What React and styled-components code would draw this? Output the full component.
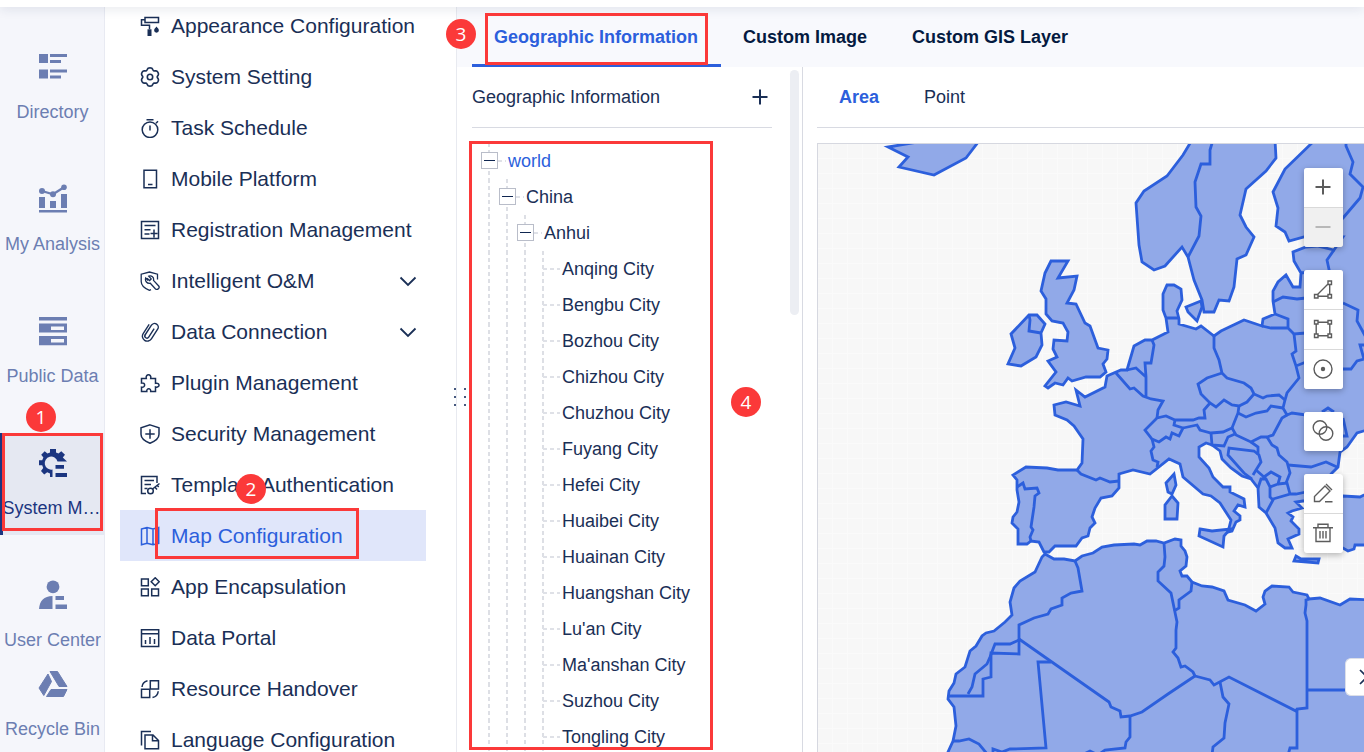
import styled, { createGlobalStyle, css } from 'styled-components';

const blue = '#2c5fdc';
const ink = '#1a2f56';
const muted = '#6c7eb2';
const red = '#fb3939';

const GlobalStyle = createGlobalStyle`
  * { box-sizing: border-box; }
  body {
    margin: 0;
    font-family: 'Liberation Sans', Arial, sans-serif;
    font-size: 18px;
    color: ${ink};
    background: #fff;
  }
  button {
    padding: 0;
    border: 0;
    background: none;
    color: inherit;
    font: inherit;
    cursor: pointer;
  }
  a { color: inherit; text-decoration: none; }
  ul { margin: 0; padding: 0; list-style: none; }
  svg { display: block; flex: none; }
`;

const Page = styled.div`
  position: relative;
  display: flex;
  flex-direction: column;
  height: 100vh;
  overflow: hidden;
`;

const TopBar = styled.header`
  position: relative;
  z-index: 2;
  flex: none;
  height: 7px;
  background: #fff;
  box-shadow: 0 1px 12px rgba(30, 50, 90, 0.15);
`;

const Body = styled.div`
  display: flex;
  flex: 1;
  min-height: 0;
`;

/* ---------- left rail ---------- */

const Rail = styled.nav`
  display: flex;
  flex-direction: column;
  flex: none;
  width: 105px;
  border-right: 1px solid #e8eaf2;
  background: #f5f6fb;
`;

const RailList = styled.ul`
  display: flex;
  flex: 1;
  flex-direction: column;
  gap: 30px;
  min-height: 0;
  padding-top: 30px;
  overflow: hidden;
`;

const RailFoot = styled.div`
  flex: none;
  height: 98px;
`;

const RailLink = styled.a`
  display: flex;
  flex-direction: column;
  align-items: center;
  gap: 19px;
  height: 102px;
  padding: 15px 0 0 1px;
  color: ${muted};
  ${p =>
    p.$active &&
    css`
      background: #e5e8f2;
      box-shadow: inset 3px 0 #1b3580;
      color: #1b3580;
    `}
`;

const RailLabel = styled.span`
  max-width: 100px;
  overflow: hidden;
  line-height: 22px;
  text-overflow: ellipsis;
  white-space: nowrap;
`;

/* ---------- settings menu ---------- */

const Menu = styled.nav`
  flex: none;
  width: 352px;
  padding: 0 30px 0 15px;
  border-right: 1px solid #e8eaf0;
  overflow: hidden;
`;

const MenuList = styled.ul`
  margin-top: -7px;
`;

const MenuLink = styled.a`
  display: flex;
  align-items: center;
  gap: 11px;
  height: 51px;
  padding: 0 8px 0 20px;
  font-size: 21px;
  white-space: nowrap;
  color: ${p => (p.$active ? blue : ink)};
  background: ${p => (p.$active ? '#e0e6fa' : 'none')};
`;

const MenuText = styled.span`
  flex: 1;
`;

/* ---------- content ---------- */

const Content = styled.main`
  display: flex;
  flex: 1;
  flex-direction: column;
  min-width: 0;
`;

const TabBar = styled.div`
  display: flex;
  flex: none;
  height: 60px;
  padding-left: 15px;
  background: #f8f9fd;
`;

const Tab = styled.button`
  padding: 4px 23px 0 22px;
  border-bottom: 3px solid ${p => (p.$active ? blue : 'transparent')};
  font-weight: bold;
  color: ${p => (p.$active ? blue : '#041a40')};
`;

const Panes = styled.div`
  display: flex;
  flex: 1;
  min-height: 0;
`;

const TreePane = styled.section`
  display: flex;
  flex: none;
  width: 346px;
  padding-left: 15px;
  border-right: 1px solid #d8dae2;
  overflow: hidden;
`;

const TreeBody = styled.div`
  width: 300px;
`;

const TreeHead = styled.div`
  display: flex;
  align-items: center;
  justify-content: space-between;
  height: 61px;
  padding-right: 4px;
  border-bottom: 1px solid #d8dae2;
`;

const Scrollbar = styled.div`
  width: 9px;
  height: 245px;
  margin: 3px 0 0 18px;
  border-radius: 5px;
  background: #eceef3;
`;

const Tree = styled.ul`
  padding: 15px 0 0 8px;
`;

const TreeRow = styled.li`
  display: flex;
  align-items: center;
  height: 36px;
  white-space: nowrap;
  color: ${p => (p.$active ? blue : ink)};
`;

const Guide = styled.span`
  display: flex;
  align-items: center;
  justify-content: center;
  width: 18px;
  height: 36px;
  padding-bottom: 1px;
  background: repeating-linear-gradient(#dddfe5 0 4px, transparent 4px 7px) center / 2px 100% no-repeat;
`;

const Dashes = styled.span`
  width: ${p => (p.$leaf ? 17 : 8)}px;
  height: 2px;
  margin: 0 2px 0 ${p => (p.$leaf ? -9 : 0)}px;
  background: repeating-linear-gradient(90deg, #dfe1e7 0 4px, transparent 4px 7px);
`;

const Toggle = styled.button`
  display: flex;
  align-items: center;
  justify-content: center;
  width: 17px;
  height: 17px;
  border: 1px solid #b9bdc9;
  background: #fff;

  &::after {
    content: '';
    width: 11px;
    height: 1px;
    background: #0f2650;
  }
`;

const MapPane = styled.section`
  display: flex;
  flex: 1;
  flex-direction: column;
  min-width: 0;
  padding-left: 14px;
`;

const SubTabs = styled.div`
  display: flex;
  flex: none;
  gap: 45px;
  height: 61px;
  margin-bottom: 15px;
  padding-left: 22px;
  border-bottom: 1px solid #d8dae2;
`;

const SubTab = styled.button`
  font-weight: ${p => (p.$active ? 'bold' : 'normal')};
  color: ${p => (p.$active ? blue : ink)};
`;

const MapBox = styled.div`
  position: relative;
  flex: 1;
  min-height: 0;
  border: solid #d6d8e0;
  border-width: 1px 0 0 1px;
  overflow: hidden;
  background:
    linear-gradient(90deg, #fafafa 1px, transparent 1px) 14px 14px / 15px 15px,
    linear-gradient(#fafafa 1px, transparent 1px) 14px 14px / 15px 15px,
    #f7f7f7;
`;

const Tools = styled.div`
  position: absolute;
  top: 24px;
  right: 21px;
  display: flex;
  flex-direction: column;
  gap: 23px;
`;

const ToolGroup = styled.div`
  display: flex;
  flex-direction: column;
  gap: 1px;
  border-radius: 3px;
  overflow: hidden;
  background: #d9d9d9;
  box-shadow: 0 2px 6px rgba(0, 0, 0, 0.28);
`;

const Tool = styled.button`
  display: flex;
  align-items: center;
  justify-content: center;
  width: 39px;
  height: 39px;
  padding: 0 1px 1px 0;
  color: #5c5c5c;
  background: #fff;

  &:disabled {
    color: #b8b8b8;
    background: #f0f0f0;
  }
`;

const Expand = styled.button`
  position: absolute;
  top: 514px;
  right: 0;
  display: flex;
  align-items: center;
  width: 19px;
  height: 38px;
  padding-left: 13px;
  border: 1px solid #dcdfe8;
  border-right: 0;
  border-radius: 6px 0 0 6px;
  background: #fff;
  overflow: hidden;
`;

/* ---------- overlays ---------- */

const Grip = styled.span`
  position: absolute;
  top: 388px;
  left: 454px;
  display: grid;
  grid-template-columns: 2px 2px;
  gap: 6px 8px;

  i {
    width: 2px;
    height: 2px;
    background: #46587e;
  }
`;

const Frame = styled.div`
  position: absolute;
  z-index: 3;
  top: ${p => p.$top}px;
  left: ${p => p.$left}px;
  width: ${p => p.$width}px;
  height: ${p => p.$height}px;
  border: 3px solid ${red};
  pointer-events: none;
`;

const Step = styled.span`
  position: absolute;
  z-index: 3;
  top: ${p => p.$top}px;
  left: ${p => p.$left}px;
  width: 30px;
  border-radius: 50%;
  background: ${red};
  color: #fff;
  font: 19px/30px 'Open Sans', 'Noto Sans', sans-serif;
  text-align: center;
`;

/* ---------- icons ---------- */

const Line = ({ children, size = 20, w = 1.5 }) => (
  <svg width={size} height={size} viewBox={`0 0 ${size} ${size}`} fill="none" stroke="currentColor" strokeWidth={w}>
    {children}
  </svg>
);

const Solid = ({ children }) => (
  <svg width="30" height="30" viewBox="0 0 30 30" fill="currentColor">
    {children}
  </svg>
);

// six soft teeth around the hub
const gearPath =
  'M' +
  Array.from({ length: 60 }, (_, i) => {
    const a = (i / 60) * Math.PI * 2;
    const r = 8.4 - 1 * Math.cos(6 * a) - 0.25 * Math.cos(12 * a);
    return `${(10 + r * Math.cos(a)).toFixed(2)} ${(10 + r * Math.sin(a)).toFixed(2)}`;
  }).join('L') +
  'Z';

const icons = {
  roller: (
    <Line>
      <path d="M5 1.5h13.500v5H5zM5 3.800H1.500v5.500h8v4" />
      <path d="M7.500 13.300h4V20h-4z" fill="currentColor" stroke="none" />
      <path d="M16.500 10.500c1.400 1.800 2.400 2.600 2.400 3.800a2.400 2.400 0 0 1-4.800 0c0-1.200 1-2 2.400-3.800z" fill="currentColor" stroke="none" />
    </Line>
  ),
  gear: (
    <Line w={1.6}>
      <path d={gearPath} />
      <circle cx="10" cy="10" r="2.700" />
    </Line>
  ),
  timer: (
    <Line>
      <circle cx="10" cy="11.700" r="7.800" />
      <path d="M6.500 1.700h7M10 7.500v5M16 5.300l2-2" />
    </Line>
  ),
  phone: (
    <Line>
      <path d="M4 1.200h12.500v17.600H4zM8 15.500h4.500" />
    </Line>
  ),
  form: (
    <Line>
      <path d="M1.500 1.500h17v17h-17zM4.500 5.500h11M4.500 9.800h6M4.500 14h5M14 9.500v8M10.500 13.500h7" />
    </Line>
  ),
  ops: (
    <Line w={1.3}>
      <path d="M17.500 8.500V3.200L9.500 1 1.200 3.200V10.500c0 4 3.500 7 8.300 8.800l1.500-.700" />
      <path d="M7 7.200l2.600 2.300 1.600-1.600L8.800 5.200c2.800-1 5.400 1.200 4.700 4.200l5.200 5.600c1.500 2-1.200 4.400-3.200 2.900l-5.200-5.700c-3.300.600-5.600-2.100-4.600-5.200L8.200 9.500" />
    </Line>
  ),
  clip: (
    <Line w={1.4}>
      <g transform="rotate(33 10 10)">
        <path d="M7.500 15.500V3.500a3.700 3.700 0 0 1 7.400 0V15a4.900 4.900 0 0 1-9.800 0V4" />
        <path d="M7.500 15a1.900 1.900 0 0 0 4.200 0V5" />
      </g>
    </Line>
  ),
  puzzle: (
    <Line>
      <path d="M1.500 5.500h4.800c-1.300-5 5.700-5 4.400 0h4.800v4.800c4.700-1.100 4.700 4.800 0 3.700v4.500h-4.800c.500-3.800-4.400-3.800-3.900 0H1.500v-4.300c4.200.700 4.200-4.900 0-4.200z" />
    </Line>
  ),
  shield: (
    <Line>
      <path d="M10 .9l9 3v6.300c0 4-3.500 6.800-9 9-5.500-2.200-9-5-9-9V3.900zM10 5.300v9.400M5.300 10h9.400" />
    </Line>
  ),
  template: (
    <Line>
      <path d="M17 8V1.500H1.500v17H6M4.500 5.500H14M4.500 9.500H11M4.500 13.500h3" />
      <circle cx="10.500" cy="16" r="2.800" />
      <path d="M12.500 14l7-5.500M15 12.200l2 2.300M17.200 10.300l1.500 1.800" />
    </Line>
  ),
  map: (
    <Line>
      <path d="M1.500 3l5.500-1.500 6 1.500 5.700-1.500v16L13 18.700l-6-1.500-5.500 1.500zM7 1.500v15.700M13 3v15.700" />
    </Line>
  ),
  apps: (
    <Line>
      <path d="M1.500 2h6.800v6.800H1.500zM1.500 12h6.800v6.800H1.500zM11.700 12h6.800v6.800h-6.800zM15.200.8l4 4-4 4-4-4z" />
    </Line>
  ),
  portal: (
    <Line>
      <path d="M1.500 1.800h17.200v16.700H1.500zM1.500 5.700h17.200M5.500 12v4M10 9v7M14.500 11v5" />
    </Line>
  ),
  handover: (
    <Line>
      <path d="M10.300 1.800h8.200V10h-8.200zM1.500 10.300h8.200v8.200H1.500zM2 8c.300-3.500 2-5.500 5.500-6.300M18.200 12.200c-.300 3.500-2 5.500-5.700 6.300" />
    </Line>
  ),
  copy: (
    <Line>
      <path d="M11 1.500H1.500v14M5 5h8l5.500 5.500v8.300H5zM12.500 5v5.800h6" />
    </Line>
  ),
  directory: (
    <Solid>
      <path d="M1 2h9v9H1zM12 2h17v3H12zM12 8h11v3H12zM1 17.500h9v9H1zM12 17.500h17v3H12zM12 23.500h11v3H12z" />
    </Solid>
  ),
  analysis: (
    <Solid>
      <path d="M1 13h6v11H1zM12 17h6v7h-6zM23 10h6v14h-6zM1 26h28v2.500H1z" />
      <circle cx="4" cy="7" r="3" />
      <circle cx="15" cy="10.300" r="3" />
      <circle cx="26" cy="3.200" r="2.800" />
      <path d="M4 7l11 3.300 11-7" fill="none" stroke="currentColor" strokeWidth="2.300" />
    </Solid>
  ),
  data: (
    <Solid>
      <path d="M1 1h28v3.500H1z" />
      <path d="M1 7.500h28v9H1zm12 3v3.500h13v-3.500zM1 20h28v9.300H1zm12 3v3.500h13V23z" fillRule="evenodd" />
    </Solid>
  ),
  system: (
    <Solid>
      <path d="M12 1h6v3.500l2.500 1 2.800-2.300 3.700 3.500-2.200 2.800L29 13.500H19.500A6.500 6.500 0 1 0 14.500 21.500V29H12v-3.500l-2.800-1.200-3 2.200L3 23l2.200-3-1-2.800H1v-5h3.200l1.200-2.700L3.200 6.700 6.700 3.300l2.700 2.200L12 4.500z" />
      <path d="M17.500 17H26v3.800h-8.500zM17.500 25H29v4H17.500z" />
    </Solid>
  ),
  user: (
    <Solid>
      <circle cx="15" cy="6.800" r="6.400" />
      <path d="M1 29c.5-8 5-13 13.500-13v13zM17.500 16H26v4h-8.500zM17.500 24.500H29V29H17.500z" />
    </Solid>
  ),
  bin: (
    <Solid>
      <path d="M12 2.500h7.500L29 17.500h-8zM10 5l3.500 7.500L5.800 26.500 1 19zM13 20.500h16L25.500 27.500H8.500z" strokeLinejoin="round" stroke="currentColor" />
    </Solid>
  ),
};

const ChevronDown = () => (
  <Line w={1.8}>
    <path d="M2.500 6.500L10 14l7.500-7.500" />
  </Line>
);

/* ---------- data ---------- */

const rail = [
  ['directory', 'Directory'],
  ['analysis', 'My Analysis'],
  ['data', 'Public Data'],
  ['system', 'System Management'],
  ['user', 'User Center'],
];

const menu = [
  ['roller', 'Appearance Configuration'],
  ['gear', 'System Setting'],
  ['timer', 'Task Schedule'],
  ['phone', 'Mobile Platform'],
  ['form', 'Registration Management'],
  ['ops', 'Intelligent O&M', true],
  ['clip', 'Data Connection', true],
  ['puzzle', 'Plugin Management'],
  ['shield', 'Security Management'],
  ['template', 'Template Authentication'],
  ['map', 'Map Configuration'],
  ['apps', 'App Encapsulation'],
  ['portal', 'Data Portal'],
  ['handover', 'Resource Handover'],
  ['copy', 'Language Configuration'],
];

const parents = ['world', 'China', 'Anhui'];

const cities = [
  'Anqing City',
  'Bengbu City',
  'Bozhou City',
  'Chizhou City',
  'Chuzhou City',
  'Fuyang City',
  'Hefei City',
  'Huaibei City',
  'Huainan City',
  'Huangshan City',
  "Lu'an City",
  "Ma'anshan City",
  'Suzhou City',
  'Tongling City',
];

// closed coast lines
const land = [
  // iceland
  'M924 141L888 147 908 157 899 167 934 175 966 158 979 141z',
  // norway, sweden
  'M1192 140L1183 155 1167 176 1144 191 1136 203 1139 245 1142 262 1154 270 1165 266 1182 247 1188 257 1194 280 1202 300 1204 312 1214 312 1219 300 1229 301 1234 287 1237 259 1246 255 1254 237 1246 227 1240 215 1246 189 1266 171 1276 158 1275 140z',
  // mainland
  'M1315 140L1285 169 1273 192 1278 208 1276 226 1285 232 1289 241 1304 237 1343 237 1334 250 1317 246 1306 247 1293 252 1294 261 1301 273 1300 287 1293 287 1286 275 1278 282 1273 291 1273 301 1275 314 1263 319 1262 326 1244 320 1221 331 1214 336 1201 326 1196 329 1179 324 1179 319 1177 311 1182 300 1181 289 1174 285 1167 285 1163 294 1163 310 1166 318 1168 332 1152 340 1145 340 1134 346 1127 370 1121 370 1107 376 1105 387 1085 397 1076 390 1080 406 1066 402 1054 405 1055 415 1067 420 1074 426 1083 439 1082 463 1077 470 1058 470 1047 468 1026 467 1013 475 1017 480 1017 490 1019 502 1017 512 1013 517 1012 523 1018 529 1018 544 1027 544 1031 541 1039 542 1044 552 1049 552 1055 546 1076 546 1082 538 1088 536 1090 528 1095 523 1092 517 1095 508 1101 498 1112 496 1119 488 1119 474 1133 470 1150 474 1169 459 1180 464 1183 477 1203 494 1211 496 1220 503 1231 520 1228 532 1232 531 1236 522 1240 520 1240 516 1234 511 1238 505 1245 507 1244 499 1230 492 1230 487 1223 487 1213 477 1209 468 1199 457 1199 447 1206 443 1212 445 1220 451 1222 459 1231 468 1242 476 1251 479 1258 488 1259 507 1266 513 1275 528 1278 543 1285 548 1292 548 1288 539 1299 534 1299 529 1291 521 1293 517 1288 513 1292 511 1302 508 1296 502 1303 501 1312 501 1325 497 1322 485 1332 473 1338 467 1340 452 1347 447 1357 433 1370 429V140z',
  // great britain
  'M1051 261L1068 261 1058 278 1077 276 1074 290 1067 303 1076 304 1085 323 1090 326 1098 348 1108 350 1107 359 1103 364 1106 372 1100 377 1086 377 1072 381 1068 378 1063 385 1055 383 1048 388 1045 386 1056 372 1048 361 1057 357 1053 349 1054 340 1067 341 1068 332 1063 323 1052 321 1046 314 1046 299 1041 291 1045 273z',
  // ireland
  'M1029 315L1037 315 1045 324 1041 333 1042 345 1036 357 1021 366 1008 364 1015 348 1011 334z',
  // zealand
  'M1186 307L1201 301 1202 307 1197 321 1188 312z',
  // corsica, sardinia, sicily, crete
  'M1174 474L1176 485 1172 494 1168 492 1166 483z',
  'M1172 496L1178 503 1177 519 1165 519 1165 505z',
  'M1200 529L1212 531 1230 529 1224 536 1223 547 1199 536z',
  'M1296 556L1301 559 1319 559 1318 563 1294 561z',
  // turkey
  'M1370 492L1360 497 1343 496 1320 500 1320 545 1343 548 1348 551 1354 549 1355 545 1370 545z',
  // africa
  'M1045 554L1054 559 1064 559 1075 561 1082 556 1093 553 1102 547 1114 545 1134 544 1140 545 1147 541 1156 541 1164 543 1175 539 1181 540 1181 546 1185 551 1187 557 1186 566 1180 571 1182 576 1187 576 1192 582 1202 586 1212 587 1224 591 1228 600 1245 605 1256 611 1265 604 1263 597 1265 591 1272 586 1289 587 1293 592 1307 595 1309 599 1320 598 1340 605 1350 599 1370 600V790H935L948 752 953 741 956 726 954 707 948 699 949 691 954 683 956 674 965 667 970 651 976 646 982 636 986 633 994 631 1005 622 1012 615 1010 602 1014 588 1020 581 1035 572 1042 557z',
];

const borders = [
  // north and east
  'M1188 257L1199 236 1201 216 1196 207 1195 182 1201 164 1210 164 1210 150 1213 140',
  'M1346 140L1346 146 1353 162 1350 174 1363 187 1360 198 1343 218 1332 232',
  'M1334 250L1327 260 1330 274M1301 273L1308 272',
  'M1343 303L1358 310 1357 321 1368 341M1368 345H1360L1364 359 1357 361 1351 369H1343',
  'M1273 302L1283 297 1297 299 1306 298',
  'M1275 314L1288 319V328H1271L1262 326M1288 328L1294 334 1306 333',
  'M1294 334L1296 351 1292 354 1296 366 1306 362M1296 366L1299 378 1287 393 1285 400 1283 408 1287 415 1292 413 1306 415',
  // central
  'M1214 336V348L1219 360 1222 373 1227 378 1244 383 1251 388 1254 394 1263 398 1267 396 1279 395 1285 400',
  'M1222 373L1207 378 1198 384 1201 394 1210 403 1216 407 1224 400 1232 405 1239 406 1247 402 1254 394',
  'M1210 403L1204 410 1205 418 1199 418 1193 420H1175L1166 416 1157 418 1145 430 1152 439 1159 442 1166 437 1170 439 1172 433 1179 436 1183 428 1174 425 1175 420',
  'M1239 406L1238 413 1232 428 1223 432 1211 433 1200 430 1197 425 1183 428',
  'M1238 413L1246 417 1256 413 1267 411 1271 406 1283 408M1287 415L1282 418 1273 435 1267 437 1261 437 1251 442 1236 435 1232 428',
  'M1211 433L1212 445 1224 446 1228 437 1235 434',
  'M1252 479L1244 473 1228 455 1229 448 1254 451 1259 455 1261 462 1256 470 1253 475',
  'M1251 442L1258 447 1258 455M1267 437L1272 445 1277 448 1279 455 1287 462 1290 473 1286 483',
  'M1288 465L1311 467 1326 462 1337 467',
  'M1256 470L1264 477 1271 472 1280 477 1278 484 1270 487 1266 479 1261 479 1258 488M1270 487V497L1273 500 1266 513',
  'M1278 484L1287 483 1290 494 1273 499M1290 494L1296 494 1306 492',
  'M1322 412L1328 408 1334 412M1343 418L1347 436H1341',
  // west
  'M1116 373L1130 389 1134 388 1143 396 1151 399 1163 401 1158 410 1157 418',
  'M1152 439L1154 447 1151 451 1153 460 1158 462 1157 467',
  'M1127 370L1136 368 1146 377 1146 396M1152 340L1154 345 1151 363 1145 363 1146 377',
  'M1166 318H1179M1077 470L1081 474 1096 480 1100 478 1110 482 1119 481',
  'M1017 487L1023 483 1025 489 1037 488 1039 493 1035 496 1034 507 1031 527 1033 530 1030 537 1031 541',
  'M1029 315L1030 320 1029 331 1041 333',
  // africa
  'M1075 561L1078 568 1082 591 1071 593 1062 598V605L1051 609 1048 614 1034 618 1019 625V654L991 653V677L983 679V696H948',
  'M1019 640L1010 644H995L990 657 987 664 975 674 972 687 968 694',
  'M1019 639L1109 702 1111 707 1120 711 1121 717 1130 716 1142 712 1168 694 1195 676 1193 672 1185 666 1181 667 1178 658 1173 652 1176 648 1176 630 1177 622 1171 593 1158 581 1158 572 1164 566 1165 557 1164 543',
  'M1192 582L1191 591 1179 600 1179 608 1174 611',
  'M1051 662H1038L1046 748 1010 749 1002 752 993 749V755',
  'M1130 716V737L1126 742 1125 748 1105 750 1098 755M1082 755L1090 751 1098 755',
  'M1195 676L1210 680 1214 685 1229 677 1296 711 1297 709 1307 708V621L1305 613 1306 605 1306 600 1309 599',
  'M1307 690H1370M1220 682L1223 697 1229 704 1225 723 1224 738 1213 747 1212 755',
  'M1297 709V748H1290L1288 755M953 741L959 741 969 739 979 744 988 755',
];

const WorldMap = () => (
  <svg width="100%" height="100%" role="img" aria-label="Map of Europe and North Africa">
    <g transform="translate(-818 -144)" stroke={blue} strokeWidth="2.800">
      {land.map(d => (
        <path key={d} d={d} fill="#91a9e8" />
      ))}
      {borders.map(d => (
        <path key={d} d={d} fill="none" />
      ))}
    </g>
  </svg>
);

const RailItem = ({ icon, label, active }) => (
  <RailLink href="#" $active={active}>
    {icons[icon]}
    <RailLabel>{label}</RailLabel>
  </RailLink>
);

const MapTools = () => (
  <Tools>
    <ToolGroup>
      <Tool aria-label="Zoom in">
        <Line w={2}>
          <path d="M10 2.500v15M2.500 10h15" />
        </Line>
      </Tool>
      <Tool aria-label="Zoom out" disabled>
        <Line w={2}>
          <path d="M2.500 10h15" />
        </Line>
      </Tool>
    </ToolGroup>
    <ToolGroup>
      <Tool aria-label="Draw polygon">
        <Line w={1.4}>
          <path d="M1.500 15.500h3.500v3.500H1.500zM15 15.500h3.500v3.500H15zM15 2h3.500v3.500H15zM4.500 15.500L15 5M16.700 5.500v10M5 17.200h10" />
        </Line>
      </Tool>
      <Tool aria-label="Draw rectangle">
        <Line w={1.4}>
          <path d="M1.500 1.500H5V5H1.500zM15 1.500h3.500V5H15zM1.500 15H5v3.500H1.500zM15 15h3.500v3.500H15zM5 3.200h10M5 16.800h10M3.200 5v10M16.800 5v10" />
        </Line>
      </Tool>
      <Tool aria-label="Draw circle">
        <Line w={1.4}>
          <circle cx="10" cy="10" r="9" />
          <circle cx="10" cy="10" r="2.200" fill="currentColor" stroke="none" />
        </Line>
      </Tool>
    </ToolGroup>
    <ToolGroup>
      <Tool aria-label="Merge areas">
        <Line w={1.4} size={22}>
          <circle cx="8" cy="7.500" r="6.800" />
          <circle cx="14" cy="13.500" r="6.800" />
        </Line>
      </Tool>
    </ToolGroup>
    <ToolGroup>
      <Tool aria-label="Edit">
        <Line w={1.4}>
          <path d="M1.500 18.500V13.500L12 3l5 5L6.500 18.500zM13 1l6 6M12 18.700h7.500" />
        </Line>
      </Tool>
      <Tool aria-label="Delete">
        <Line w={1.4}>
          <path d="M0 4.700h20M5 4.500V1.300h10v3.200M3 5v13.500h14V5M7 8v7.500M10 8v7.500M13 8v7.500" />
        </Line>
      </Tool>
    </ToolGroup>
  </Tools>
);

const App = () => (
  <Page>
    <GlobalStyle />
    <TopBar />
    <Body>
      <Rail>
        <RailList>
          {rail.map(([icon, label]) => (
            <li key={icon}>
              <RailItem icon={icon} label={label} active={icon === 'system'} />
            </li>
          ))}
        </RailList>
        <RailFoot>
          <RailItem icon="bin" label="Recycle Bin" />
        </RailFoot>
      </Rail>

      <Menu>
        <MenuList>
          {menu.map(([icon, label, nested]) => (
            <li key={icon}>
              <MenuLink href="#" $active={icon === 'map'}>
                {icons[icon]}
                <MenuText>{label}</MenuText>
                {nested && <ChevronDown />}
              </MenuLink>
            </li>
          ))}
        </MenuList>
      </Menu>

      <Content>
        <TabBar>
          <Tab $active>Geographic Information</Tab>
          <Tab>Custom Image</Tab>
          <Tab>Custom GIS Layer</Tab>
        </TabBar>
        <Panes>
          <TreePane>
            <TreeBody>
              <TreeHead>
                Geographic Information
                <button aria-label="Add">
                  <Line size={16} w={2}>
                    <path d="M8 .5v15M.5 8h15" />
                  </Line>
                </button>
              </TreeHead>
              <Tree>
                {parents.map((name, depth) => (
                  <TreeRow key={name} $active={depth === 0}>
                    {parents.slice(0, depth).map(p => (
                      <Guide key={p} />
                    ))}
                    <Guide>
                      <Toggle aria-label={`Collapse ${name}`} />
                    </Guide>
                    <Dashes />
                    {name}
                  </TreeRow>
                ))}
                {cities.map(city => (
                  <TreeRow key={city}>
                    <Guide />
                    <Guide />
                    <Guide />
                    <Guide />
                    <Dashes $leaf />
                    {city}
                  </TreeRow>
                ))}
              </Tree>
            </TreeBody>
            <Scrollbar />
          </TreePane>
          <MapPane>
            <SubTabs>
              <SubTab $active>Area</SubTab>
              <SubTab>Point</SubTab>
            </SubTabs>
            <MapBox>
              <WorldMap />
              <MapTools />
              <Expand aria-label="Expand">
                <Line size={16} w={1.7}>
                  <path d="M1 1l7 7-7 7" />
                </Line>
              </Expand>
            </MapBox>
          </MapPane>
        </Panes>
      </Content>
    </Body>

    <Grip>
      <i />
      <i />
      <i />
      <i />
      <i />
      <i />
    </Grip>

    <Frame $left={2} $top={433} $width={101} $height={98} />
    <Frame $left={155} $top={508} $width={204} $height={51} />
    <Frame $left={485} $top={13} $width={223} $height={52} />
    <Frame $left={469} $top={141} $width={244} $height={609} />
    <Step $left={26} $top={402}>1</Step>
    <Step $left={236} $top={474}>2</Step>
    <Step $left={446} $top={19}>3</Step>
    <Step $left={731} $top={387}>4</Step>
  </Page>
);

export default App;
